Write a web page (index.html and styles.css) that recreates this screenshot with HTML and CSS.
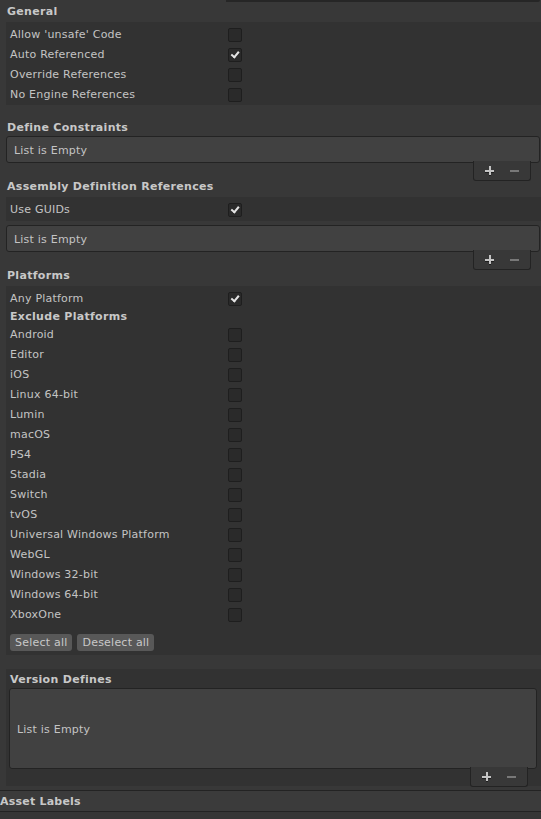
FILE: index.html
```html
<!DOCTYPE html>
<html lang="en">
<head>
    <meta charset="UTF-8">
    <meta name="viewport" content="width=device-width, initial-scale=1.0">
    <title>Assembly Definition Inspector</title>
    <link rel="stylesheet" href="styles.css">
</head>
<body>
    <div class="inspector">
        <div class="field-stub"></div>

        <!-- General -->
        <div class="section first">
            <div class="section-title">General</div>
            <div class="group">
                <div class="row"><span class="label">Allow 'unsafe' Code</span><span class="toggle"></span></div>
                <div class="row"><span class="label">Auto Referenced</span><span class="toggle checked"></span></div>
                <div class="row"><span class="label">Override References</span><span class="toggle"></span></div>
                <div class="row"><span class="label">No Engine References</span><span class="toggle"></span></div>
            </div>
        </div>

        <!-- Define Constraints -->
        <div class="section after-group">
            <div class="section-title">Define Constraints</div>
            <div class="list">
                <span class="list-empty">List is Empty</span>
                <div class="list-footer">
                    <span class="list-btn add"></span>
                    <span class="list-btn remove"></span>
                </div>
            </div>
        </div>

        <!-- Assembly Definition References -->
        <div class="section">
            <div class="section-title">Assembly Definition References</div>
            <div class="group single">
                <div class="row"><span class="label">Use GUIDs</span><span class="toggle checked"></span></div>
            </div>
            <div class="list spaced">
                <span class="list-empty">List is Empty</span>
                <div class="list-footer">
                    <span class="list-btn add"></span>
                    <span class="list-btn remove"></span>
                </div>
            </div>
        </div>

        <!-- Platforms -->
        <div class="section">
            <div class="section-title">Platforms</div>
            <div class="group platforms">
                <div class="row"><span class="label">Any Platform</span><span class="toggle checked"></span></div>
                <div class="row sub-title">Exclude Platforms</div>
                <div class="row"><span class="label">Android</span><span class="toggle"></span></div>
                <div class="row"><span class="label">Editor</span><span class="toggle"></span></div>
                <div class="row"><span class="label">iOS</span><span class="toggle"></span></div>
                <div class="row"><span class="label">Linux 64-bit</span><span class="toggle"></span></div>
                <div class="row"><span class="label">Lumin</span><span class="toggle"></span></div>
                <div class="row"><span class="label">macOS</span><span class="toggle"></span></div>
                <div class="row"><span class="label">PS4</span><span class="toggle"></span></div>
                <div class="row"><span class="label">Stadia</span><span class="toggle"></span></div>
                <div class="row"><span class="label">Switch</span><span class="toggle"></span></div>
                <div class="row"><span class="label">tvOS</span><span class="toggle"></span></div>
                <div class="row"><span class="label">Universal Windows Platform</span><span class="toggle"></span></div>
                <div class="row"><span class="label">WebGL</span><span class="toggle"></span></div>
                <div class="row"><span class="label">Windows 32-bit</span><span class="toggle"></span></div>
                <div class="row"><span class="label">Windows 64-bit</span><span class="toggle"></span></div>
                <div class="row"><span class="label">XboxOne</span><span class="toggle"></span></div>
                <div class="button-row">
                    <button class="mini-btn">Select all</button>
                    <button class="mini-btn">Deselect all</button>
                </div>
            </div>
        </div>

        <!-- Version Defines -->
        <div class="version-box">
            <div class="section-title inner">Version Defines</div>
            <div class="list tall">
                <span class="list-empty">List is Empty</span>
                <div class="list-footer">
                    <span class="list-btn add"></span>
                    <span class="list-btn remove"></span>
                </div>
            </div>
        </div>

        <div class="asset-labels">Asset Labels</div>
        <div class="rest"></div>
    </div>
</body>
</html>
```

FILE: styles.css
```css
* {
    margin: 0;
    padding: 0;
    box-sizing: border-box;
    font-family: 'DejaVu Sans', Verdana, sans-serif;
}

body {
    background-color: #383838;
    color: #c4c4c4;
    font-size: 11px;
    letter-spacing: 0.22px;
    width: 541px;
    height: 819px;
    overflow: hidden;
}

.field-stub {
    margin-left: 226px;
    width: 314px;
    height: 2px;
    background-color: #262626;
    border-bottom-right-radius: 3px;
}

.section {
    margin-left: 6px;
    margin-top: 14px;
}

.section.first {
    margin-top: 0;
}

.section.after-group {
    margin-top: 13px;
}

.section-title {
    height: 18px;
    line-height: 20px;
    padding-left: 1px;
    font-weight: bold;
    letter-spacing: 0.3px;
    color: #c8c8c8;
}

.group {
    background-color: #323232;
    margin-top: 2px;
    padding: 2px 0 1px 0;
}

.group.single {
    padding: 2px 0;
}

.group.platforms {
    padding: 2px 0 4px 0;
}

.row {
    height: 20px;
    display: flex;
    align-items: center;
    padding-left: 4px;
}

.row .label {
    flex: 0 0 218px;
    white-space: nowrap;
}

.row.sub-title {
    height: 16px;
    font-weight: bold;
    letter-spacing: 0.3px;
    color: #c8c8c8;
}

.toggle {
    width: 14px;
    height: 14px;
    margin-top: 2px;
    background-color: #2a2a2a;
    border: 1px solid #1e1e1e;
    border-radius: 2px;
    position: relative;
}

.toggle.checked::after {
    content: "";
    position: absolute;
    left: 3px;
    top: 1px;
    width: 3px;
    height: 6px;
    border-right: 2px solid #e4e4e4;
    border-bottom: 2px solid #e4e4e4;
    transform: rotate(40deg);
    transform-origin: 60% 60%;
}

.list {
    position: relative;
    height: 27px;
    margin-right: 1px;
    background-color: #414141;
    border: 1px solid #232323;
    border-radius: 3px;
    display: flex;
    align-items: center;
    padding: 1px 0 0 7px;
}

.list.spaced {
    margin-top: 4px;
}

.list.tall {
    height: 81px;
    margin: 0;
}

.list-footer {
    position: absolute;
    right: 8px;
    top: calc(100% - 1px);
    width: 58px;
    height: 20px;
    background-color: #383838;
    border: 1px solid #232323;
    border-top: none;
    border-radius: 0 0 3px 3px;
    display: flex;
    align-items: center;
    padding-left: 11px;
    gap: 16px;
}

.list-btn {
    position: relative;
    width: 9px;
    height: 9px;
}

.list-btn::before,
.list-btn::after {
    content: "";
    position: absolute;
}

.list-btn.add::before {
    left: 0;
    top: 4px;
    width: 9px;
    height: 2px;
    background-color: #c4c4c4;
    box-shadow: 0 1px 0 #1e1e1e;
}

.list-btn.add::after {
    left: 4px;
    top: 0;
    width: 2px;
    height: 9px;
    background-color: #c4c4c4;
    box-shadow: 0 1px 0 #1e1e1e;
}

.list-btn.remove::before {
    left: 0;
    top: 4px;
    width: 9px;
    height: 2px;
    background-color: #787878;
}

.button-row {
    display: flex;
    gap: 5px;
    padding-left: 4px;
    margin-top: 10px;
}

.mini-btn {
    height: 17px;
    padding: 0 5px;
    background-color: #585858;
    color: #c8c8c8;
    border: none;
    border-radius: 3px;
    font-size: 11px;
    letter-spacing: 0.22px;
    line-height: 17px;
}

.version-box {
    margin: 14px 0 0 6px;
    background-color: #323232;
    padding: 1px 4px 17px 3px;
}

.section-title.inner {
    padding-left: 1px;
}

.asset-labels {
    margin-top: 4px;
    height: 22px;
    line-height: 22px;
    background-color: #3b3b3b;
    border-top: 1px solid #232323;
    border-bottom: 1px solid #232323;
    font-weight: bold;
    color: #c8c8c8;
}

.rest {
    height: 20px;
    background-color: #363636;
}
```
